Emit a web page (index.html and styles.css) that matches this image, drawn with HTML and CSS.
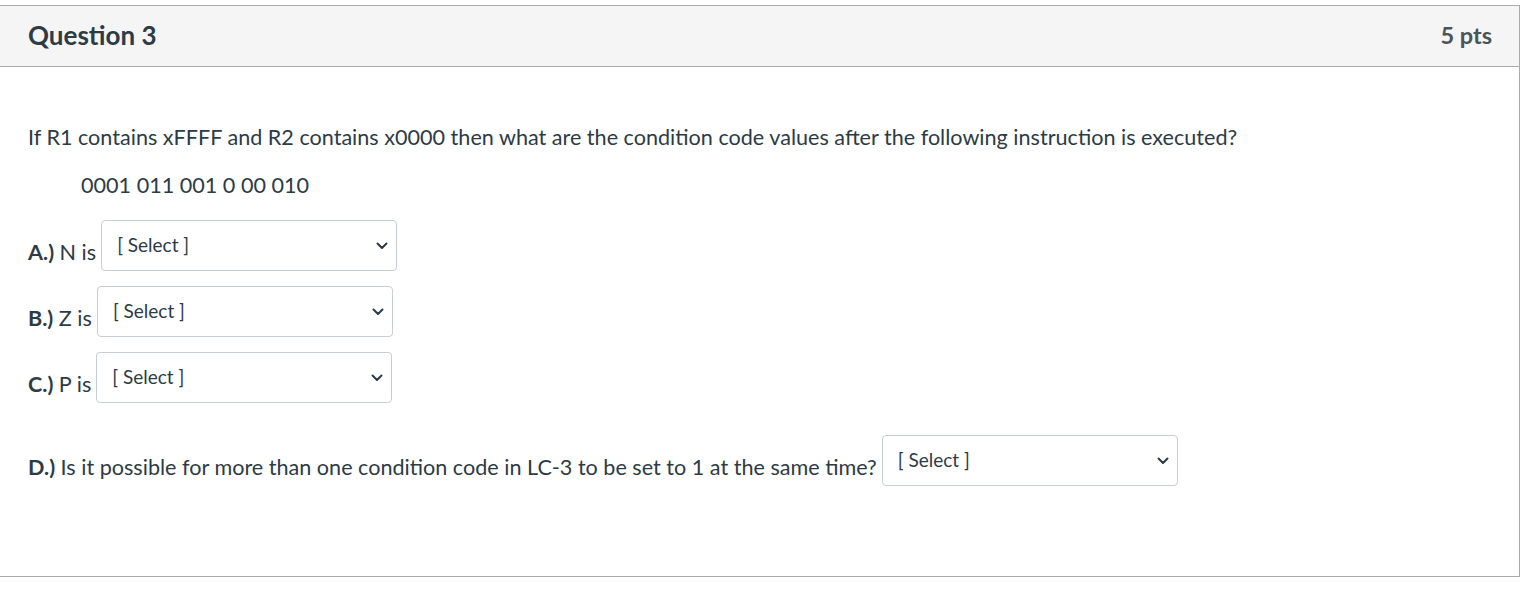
FILE: index.html
```html
<!DOCTYPE html>
<html lang="en">
<head>
<meta charset="utf-8">
<title>Question 3</title>
<link rel="stylesheet" href="styles.css">
</head>
<body>
<div class="question">
  <div class="q-header">
    <h2 class="q-name">Question 3</h2>
    <span class="q-points">5 pts</span>
  </div>
  <div class="q-body">
    <p class="q-text">If R1 contains xFFFF and R2 contains x0000 then what are the condition code values after the following instruction is executed?</p>
    <p class="q-code">0001 011 001 0 00 010</p>
    <div class="row row-a">
      <span class="label"><b>A.)</b> N is</span>
      <div class="select"><span class="select-text">[ Select ]</span><svg class="chev" width="12" height="8" viewBox="0 0 12 8"><polyline points="1.5,1.5 6,6 10.5,1.5" fill="none" stroke="#2d3b45" stroke-width="2" stroke-linecap="round" stroke-linejoin="round"/></svg></div>
    </div>
    <div class="row row-b">
      <span class="label"><b>B.)</b> Z is</span>
      <div class="select"><span class="select-text">[ Select ]</span><svg class="chev" width="12" height="8" viewBox="0 0 12 8"><polyline points="1.5,1.5 6,6 10.5,1.5" fill="none" stroke="#2d3b45" stroke-width="2" stroke-linecap="round" stroke-linejoin="round"/></svg></div>
    </div>
    <div class="row row-c">
      <span class="label"><b>C.)</b> P is</span>
      <div class="select"><span class="select-text">[ Select ]</span><svg class="chev" width="12" height="8" viewBox="0 0 12 8"><polyline points="1.5,1.5 6,6 10.5,1.5" fill="none" stroke="#2d3b45" stroke-width="2" stroke-linecap="round" stroke-linejoin="round"/></svg></div>
    </div>
    <div class="row row-d">
      <span class="label"><b>D.)</b> Is it possible for more than one condition code in LC-3 to be set to 1 at the same time?</span>
      <div class="select"><span class="select-text">[ Select ]</span><svg class="chev" width="12" height="8" viewBox="0 0 12 8"><polyline points="1.5,1.5 6,6 10.5,1.5" fill="none" stroke="#2d3b45" stroke-width="2" stroke-linecap="round" stroke-linejoin="round"/></svg></div>
    </div>
  </div>
</div>
</body>
</html>
```
FILE: styles.css
```css
html, body {
  margin: 0;
  padding: 0;
  background: #ffffff;
}
body {
  font-family: Lato, "Open Sans", sans-serif;
  color: #2d3b45;
  font-size: 21.6px;
}
.question {
  margin: 5px 0 0 -1px;
  width: 1521px;
  height: 572px;
  border: 1px solid #aaaaaa;
  box-sizing: border-box;
  display: flex;
  flex-direction: column;
}
.q-header {
  height: 61px;
  box-sizing: border-box;
  background: #f5f5f5;
  border-bottom: 1px solid #aaaaaa;
  display: flex;
  align-items: center;
  justify-content: space-between;
  padding: 0 27px 3px 28px;
}
.q-name {
  margin: 0;
  font-size: 26px;
  font-weight: 700;
  color: #2d3b45;
}
.q-points {
  font-size: 23.5px;
  font-weight: 700;
  color: #4a5459;
}
.q-body {
  padding: 55px 0 0 28px;
}
.q-text {
  margin: 0;
  line-height: 30px;
}
.q-code {
  margin: 18px 0 0 53px;
  line-height: 30px;
}
.row {
  display: flex;
  align-items: flex-end;
}
.row-a { margin-top: 20px; }
.row-b { margin-top: 15px; }
.row-c { margin-top: 15px; }
.row-d { margin-top: 32px; }
.label {
  line-height: 30px;
  padding-bottom: 4px;
}
.label b {
  font-weight: 700;
}
.select {
  margin-left: 5px;
  width: 296px;
  height: 51px;
  box-sizing: border-box;
  border: 1px solid #c7cdd1;
  border-radius: 4px;
  background: #ffffff;
  display: flex;
  align-items: center;
  justify-content: space-between;
  padding: 0 8px 0 15px;
}
.select-text {
  color: #2d3b45;
  font-size: 19px;
  line-height: 30px;
  margin-top: -2px;
}
.chev {
  display: block;
}
```
